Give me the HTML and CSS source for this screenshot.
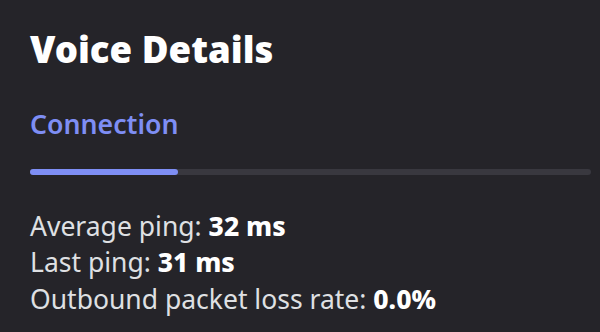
FILE: index.html
```html
<!DOCTYPE html>
<html>
<head>
<meta charset="utf-8">
<link rel="stylesheet" href="styles.css">
</head>
<body>
<div class="panel">
  <h1 class="title">Voice Details</h1>
  <div class="tabs">
    <div class="tab active">Connection</div>
  </div>
  <div class="track"><div class="thumb"></div></div>
  <div class="stats">
    <div class="row">Average ping: <b>32 ms</b></div>
    <div class="row">Last ping: <b>31 ms</b></div>
    <div class="row">Outbound packet loss rate: <b>0.0%</b></div>
  </div>
</div>
</body>
</html>
```
FILE: styles.css
```css
html, body {
  margin: 0;
  padding: 0;
  background: #252429;
}
.panel {
  width: 600px;
  height: 332px;
  box-sizing: border-box;
  padding: 25px 9px 0 30px;
  font-family: "Noto Sans", sans-serif;
  color: #dfe0e3;
}
.title {
  margin: 0;
  font-family: "Noto Sans", sans-serif;
  font-weight: 900;
  font-size: 36.6px;
  line-height: 48px;
  color: #ffffff;
}
.tabs {
  display: flex;
  margin-top: 34px;
}
.tab {
  font-size: 26.7px;
  font-weight: 600;
  line-height: 34px;
  color: #7e8ef4;
}
.track {
  margin-top: 28px;
  height: 6px;
  border-radius: 3px;
  background: #39383f;
  display: flex;
}
.thumb {
  width: 148px;
  height: 6px;
  border-radius: 3px;
  background: #7e8ef4;
}
.stats {
  margin-top: 32.5px;
  display: flex;
  flex-direction: column;
}
.row {
  font-size: 26.5px;
  line-height: 36.5px;
}
.row b {
  font-weight: 800;
  color: #ffffff;
}
```
